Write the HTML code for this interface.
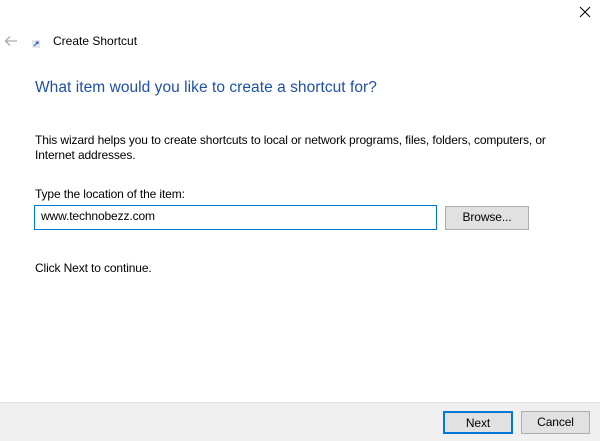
<!DOCTYPE html>
<html><head><style>
body{margin:0;width:600px;height:440px;background:#fff;position:relative;overflow:hidden;font-family:"Segoe UI","Liberation Sans",sans-serif;font-size:12px;color:#000;letter-spacing:-0.12px}
.a{position:absolute;white-space:nowrap}
.btn{position:absolute;background:#e1e1e1;border:1px solid #adadad;box-sizing:border-box;text-align:center;font-size:12px}
</style></head><body>
<svg class="a" style="left:579px;top:6px" width="12" height="12"><path d="M1 1L11 11M11 1L1 11" stroke="#000" stroke-width="1"/></svg>
<svg class="a" style="left:4px;top:35px" width="14" height="12"><path d="M13 6H2M6 1.5L1.5 6L6 10.5" stroke="#aaa" stroke-width="1.3" fill="none"/></svg>
<svg class="a" style="left:32px;top:40px" width="8" height="8"><rect x="0" y="0" width="8" height="8" fill="#e4e4ea"/><path d="M2 6L6 2M4 2H6V4" stroke="#2f64c0" stroke-width="1.2" fill="none"/></svg>
<div class="a" style="left:53px;top:34px;letter-spacing:0">Create Shortcut</div>
<div class="a" style="left:35px;top:79px;font-size:15.5px;letter-spacing:0.05px;color:#1e4fa8">What item would you like to create a shortcut for?</div>
<div class="a" style="left:35px;top:133px;line-height:15px">This wizard helps you to create shortcuts to local or network programs, files, folders, computers, or<br>Internet addresses.</div>
<div class="a" style="left:35px;top:187px">Type the location of the item:</div>
<div class="a" style="left:34px;top:205px;width:403px;height:25px;border:1px solid #0078d7;box-sizing:border-box;padding:3px 0 0 6px">www.technobezz.com</div>
<div class="btn" style="left:445px;top:206px;width:84px;height:24px;line-height:21px">Browse...</div>
<div class="a" style="left:35px;top:261px">Click Next to continue.</div>
<div class="a" style="left:0;top:402px;width:600px;height:38px;background:#f0f0f0;border-top:1px solid #e4e4e4"></div>
<div class="btn" style="left:443px;top:411px;width:70px;height:23px;line-height:20px;border:2px solid #0078d7">Next</div>
<div class="btn" style="left:521px;top:411px;width:69px;height:23px;line-height:21px">Cancel</div>
</body></html>
